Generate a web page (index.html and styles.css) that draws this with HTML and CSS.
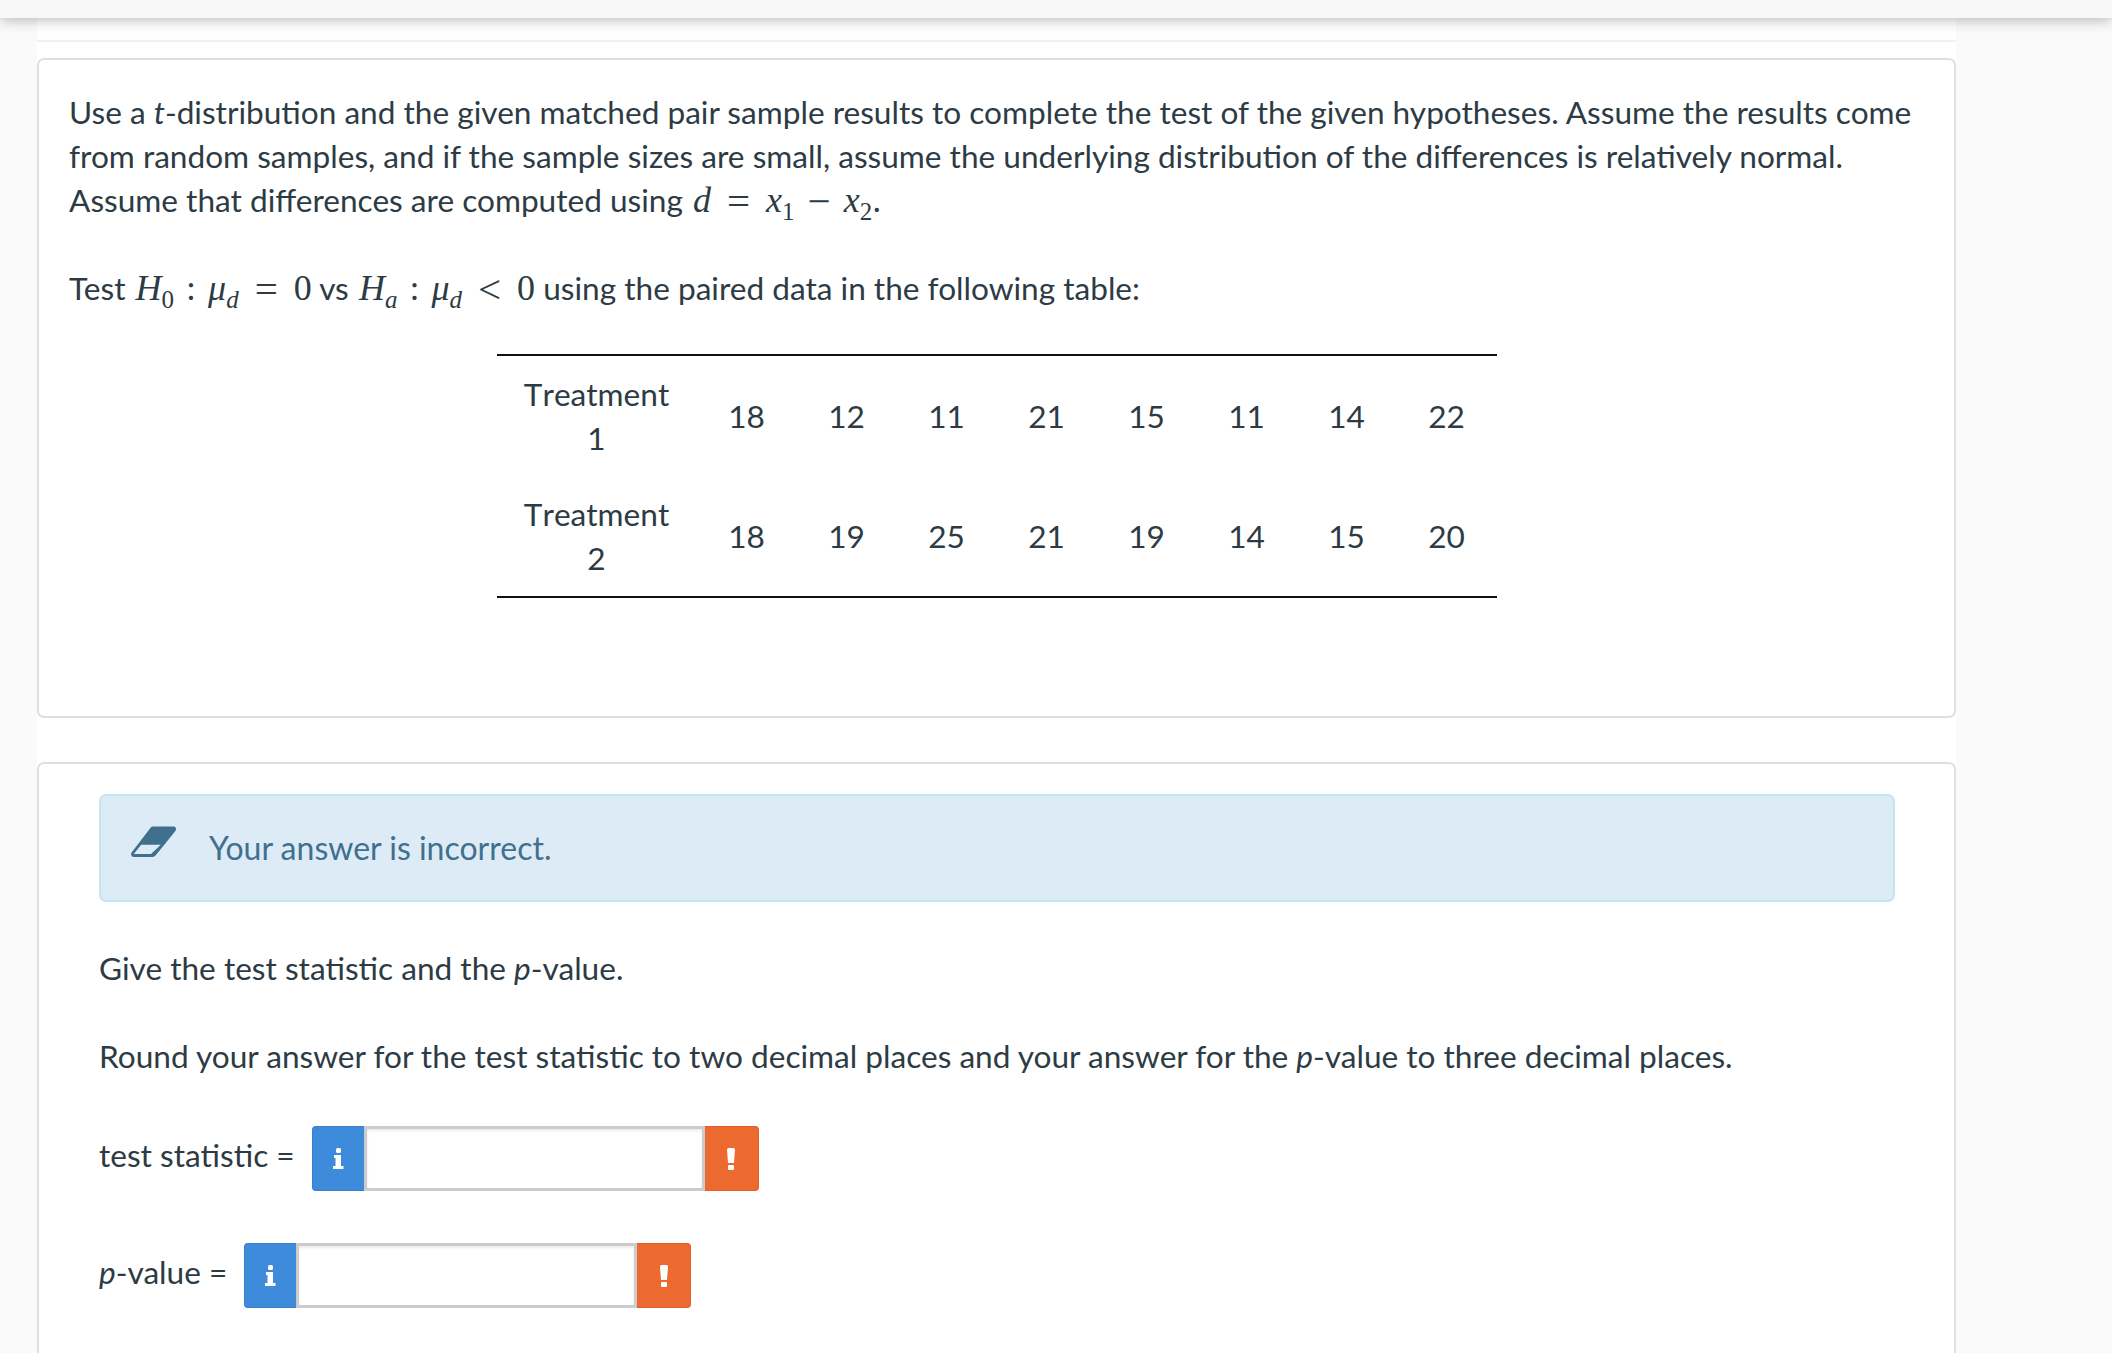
FILE: index.html
```html
<!DOCTYPE html>
<html>
<head>
    <title>Question</title>
    <link rel="stylesheet" href="styles.css">
</head>
<body>
    <div class="topbar"></div>
    <div class="main">
        <div class="rule"></div>

        <div class="card">
            <p>Use a <em>t</em>-distribution and the given matched pair sample results to complete the test of the given hypotheses. Assume the results come from random samples, and if the sample sizes are small, assume the underlying distribution of the differences is relatively normal. Assume that differences are computed using <span class="math"><i>d</i><span class="op">=</span><i>x</i><sub>1</sub><span class="op bin">−</span><i>x</i><sub>2</sub>.</span></p>

            <p class="test-line">Test <span class="math"><i>H</i><sub>0</sub><span class="op sep">:</span><i>μ</i><sub><i>d</i></sub><span class="op">=</span>0</span> vs <span class="math"><i>H</i><sub><i>a</i></sub><span class="op sep">:</span><i>μ</i><sub><i>d</i></sub><span class="op">&lt;</span>0</span> using the paired data in the following table:</p>

            <table class="data">
                <tr>
                    <td class="head">Treatment 1</td>
                    <td>18</td><td>12</td><td>11</td><td>21</td><td>15</td><td>11</td><td>14</td><td>22</td>
                </tr>
                <tr>
                    <td class="head">Treatment 2</td>
                    <td>18</td><td>19</td><td>25</td><td>21</td><td>19</td><td>14</td><td>15</td><td>20</td>
                </tr>
            </table>
        </div>

        <div class="card answer">
            <div class="alert">
                <svg class="eraser" viewBox="0 0 45 31" width="45" height="31">
                    <path fill="#41708f" fill-rule="evenodd" d="M22 0.5H42.5C44.8 0.5 45.8 3 44.4 5L25 29C24 30.3 22.8 31 21.5 31H3C0.6 31 -0.7 28.6 0.6 26.6L19 2.5C19.8 1.2 20.6 0.5 22 0.5ZM10.2 18.7L2.8 28H20L29.8 18.7Z"/>
                </svg>
                <span>Your answer is incorrect.</span>
            </div>

            <p>Give the test statistic and the <em>p</em>-value.</p>
            <p class="last">Round your answer for the test statistic to two decimal places and your answer for the <em>p</em>-value to three decimal places.</p>

            <div class="answer-row">
                <span class="answer-label">test statistic =</span>
                <div class="input-group">
                    <button class="btn-info"><svg viewBox="0 0 11 21" width="11" height="21"><rect x="3" y="0" width="5" height="5" rx="1.5" fill="#fff"/><path fill="#fff" d="M1 7H8V18H10.5V21H0V18H2.5V10H1Z"/></svg></button>
                    <input type="text">
                    <button class="btn-warn"><svg viewBox="0 0 8 22" width="8" height="22"><path fill="#fff" d="M0 1.5Q0 0 1.5 0H6.5Q8 0 8 1.5L7 15H1Z"/><rect x="1" y="17" width="6" height="5" rx="1" fill="#fff"/></svg></button>
                </div>
            </div>

            <div class="answer-row">
                <span class="answer-label"><em>p</em>-value =</span>
                <div class="input-group">
                    <button class="btn-info"><svg viewBox="0 0 11 21" width="11" height="21"><rect x="3" y="0" width="5" height="5" rx="1.5" fill="#fff"/><path fill="#fff" d="M1 7H8V18H10.5V21H0V18H2.5V10H1Z"/></svg></button>
                    <input type="text">
                    <button class="btn-warn"><svg viewBox="0 0 8 22" width="8" height="22"><path fill="#fff" d="M0 1.5Q0 0 1.5 0H6.5Q8 0 8 1.5L7 15H1Z"/><rect x="1" y="17" width="6" height="5" rx="1" fill="#fff"/></svg></button>
                </div>
            </div>
        </div>
    </div>
</body>
</html>
```

FILE: styles.css
```css
html, body { height: 1353px; overflow: hidden; }
body { margin: 0; background: #fafafa; font-family: Lato, sans-serif; font-size: 31.6px; line-height: 44px; color: #2d3b45; }
.topbar { position: relative; z-index: 1; height: 18px; background: #f8f8f8; box-shadow: 0 2px 14px rgba(0,0,0,0.28); }
.main { width: 1919px; height: 1335px; margin-left: 37px; padding-top: 22px; box-sizing: border-box; background: #fff; }
.rule { height: 2px; background: #f0f0f0; }
.card { background: #fff; border: 2px solid #e0e0e0; border-radius: 7px; padding: 30px 30px 0; margin-top: 16px; height: 626px; }
.card + .card { margin-top: 44px; height: auto; padding: 30px 59px 60px 60px; }
p { margin: 0 0 44px; }
p.last { margin-bottom: 48px; }
.test-line { margin-bottom: 44px; }
.math { margin-left: 2px; font-family: "Liberation Serif", serif; font-size: 36px; }
.math i { font-style: italic; }
.math sub { font-size: 25px; line-height: 0; }
.math .op { margin: 0 16px; font-size: 41px; font-style: normal; line-height: 0; vertical-align: -3px; }
.math .sep { margin: 0 12px; font-size: 36px; vertical-align: baseline; }
.math .bin { margin: 0 13px; }
.data { width: 1000px; margin: 0 auto; border-collapse: collapse; table-layout: fixed; border-top: 2px solid #111; border-bottom: 2px solid #111; font-kerning: none; }
.data td { width: 100px; padding: 16px 20px; text-align: center; box-sizing: border-box; }
.data td.head { width: 200px; }
.alert { display: flex; align-items: center; height: 108px; box-sizing: border-box; margin-bottom: 44px; padding-left: 30px; background: #ddebf6; border: 2px solid #c5e6f0; border-radius: 7px; color: #41708f; font-size: 32px; }
.eraser { margin-right: 33px; margin-top: -13px; }
.answer-row { display: flex; align-items: center; gap: 17px; margin-bottom: 52px; }
.answer-label { position: relative; top: -4px; }
.input-group { display: flex; height: 65px; }
.input-group input { width: 341px; height: 65px; box-sizing: border-box; border: 3px solid #ccc; box-shadow: inset 0 2px 3px rgba(0,0,0,0.08); outline: none; }
.input-group button { display: flex; align-items: center; justify-content: center; height: 65px; padding: 0; }
.btn-info { width: 52px; background: #3f8bdb; border: 1px solid #3a7fc8; border-right: none; border-radius: 4px 0 0 4px; }
.btn-warn { width: 54px; background: #ec6a30; border: 1px solid #e0602a; border-left: none; border-radius: 0 4px 4px 0; }
```
